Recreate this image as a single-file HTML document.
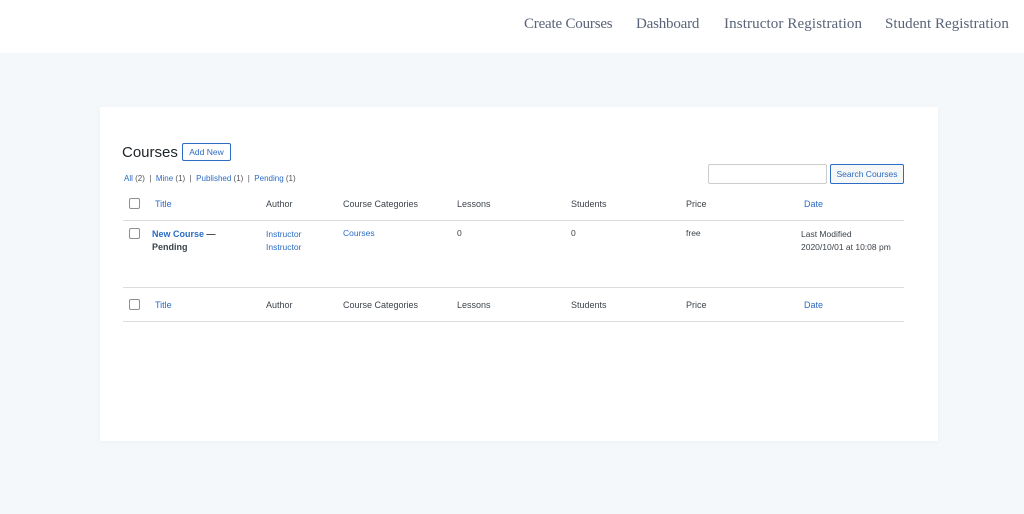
<!DOCTYPE html>
<html><head><meta charset="utf-8"><style>
*{box-sizing:border-box;margin:0;padding:0}
body{width:1024px;height:514px;background:#f5f8fb;font-family:"Liberation Sans",sans-serif;position:relative;overflow:hidden}
.hdr{position:absolute;left:0;top:0;width:1024px;height:53px;background:#fff}
.nav{position:absolute;top:16px;font-family:"Liberation Serif",serif;font-size:15px;color:#5a6478;white-space:nowrap;letter-spacing:0.1px}
.card{position:absolute;left:100px;top:107px;width:838px;height:334px;background:#fff;box-shadow:0 1px 6px rgba(0,0,0,.04)}
.a{position:absolute;font-size:9px;color:#3c434a;white-space:nowrap}
.l{color:#2b6cc4}
.cb{position:absolute;width:11px;height:11px;border:1px solid #8c8f94;border-radius:2px;background:#fff}
.hr{position:absolute;left:123px;width:781px;height:1px;background:#dcdcde}
</style></head><body>
<div class="hdr"></div>
<div class="nav" style="left:524px;letter-spacing:-0.2px">Create Courses</div>
<div class="nav" style="left:636px;letter-spacing:-0.2px">Dashboard</div>
<div class="nav" style="left:724px;letter-spacing:0.12px">Instructor Registration</div>
<div class="nav" style="left:885px;letter-spacing:0.05px">Student Registration</div>
<div class="card"></div>
<div class="a" style="left:122px;top:144px;font-size:15px;color:#1d2327">Courses</div>
<div class="a l" style="left:182px;top:143px;width:49px;height:18px;border:1px solid #2b6cc4;border-radius:2px;text-align:center;line-height:16px;font-size:8.5px">Add New</div>
<div class="a" style="left:124px;top:174px;font-size:8px;color:#555"><span class="l">All</span> (2) &nbsp;| &nbsp;<span class="l">Mine</span> (1) &nbsp;| &nbsp;<span class="l">Published</span> (1) &nbsp;| &nbsp;<span class="l">Pending</span> (1)</div>
<div class="a" style="left:708px;top:164px;width:119px;height:20px;border:1px solid #ccc;border-radius:2px"></div>
<div class="a l" style="left:830px;top:164px;width:74px;height:20px;border:1px solid #2b6cc4;border-radius:2px;background:#f6f7f7;text-align:center;line-height:18px;font-size:8.5px">Search Courses</div>
<div class="cb" style="left:129px;top:198px"></div>
<div class="a l" style="left:155px;top:199px">Title</div>
<div class="a" style="left:266px;top:199px">Author</div>
<div class="a" style="left:343px;top:199px">Course Categories</div>
<div class="a" style="left:457px;top:199px">Lessons</div>
<div class="a" style="left:571px;top:199px">Students</div>
<div class="a" style="left:686px;top:199px">Price</div>
<div class="a l" style="left:804px;top:199px">Date</div>
<div class="hr" style="top:220px"></div>
<div class="cb" style="left:129px;top:228px"></div>
<div class="a" style="left:152px;top:228px;font-weight:bold;line-height:13px"><span class="l">New Course</span> —<br>Pending</div>
<div class="a l" style="left:266px;top:228px;font-size:8.5px;line-height:13px">Instructor<br>Instructor</div>
<div class="a l" style="left:343px;top:228px;font-size:8.5px">Courses</div>
<div class="a" style="left:457px;top:228px;font-size:8.5px">0</div>
<div class="a" style="left:571px;top:228px;font-size:8.5px">0</div>
<div class="a" style="left:686px;top:228px;font-size:8.5px">free</div>
<div class="a" style="left:801px;top:228px;font-size:8.5px;line-height:13px">Last Modified<br>2020/10/01 at 10:08 pm</div>
<div class="hr" style="top:287px"></div>
<div class="cb" style="left:129px;top:299px"></div>
<div class="a l" style="left:155px;top:300px">Title</div>
<div class="a" style="left:266px;top:300px">Author</div>
<div class="a" style="left:343px;top:300px">Course Categories</div>
<div class="a" style="left:457px;top:300px">Lessons</div>
<div class="a" style="left:571px;top:300px">Students</div>
<div class="a" style="left:686px;top:300px">Price</div>
<div class="a l" style="left:804px;top:300px">Date</div>
<div class="hr" style="top:321px"></div>
</body></html>
